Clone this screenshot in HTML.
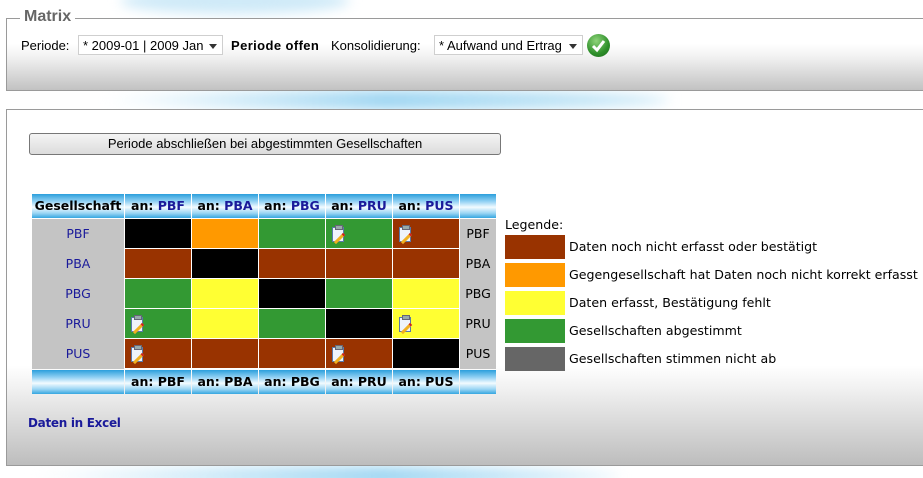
<!DOCTYPE html><html><head><meta charset="utf-8"><style>
html,body{margin:0;width:923px;height:478px;overflow:hidden;}
body{background:#fff;position:relative;font-family:"Liberation Sans",Arial,sans-serif;}
.a{position:absolute}
.glow{position:absolute;border-radius:50%;filter:blur(6px)}
.box{position:absolute;border:1px solid #9a9a9a;border-right:none}
.sel{position:absolute;top:35px;height:20px;border:1px solid #cfcfcf;background:#fff;font-size:13px;line-height:20px;padding-left:4px;box-sizing:border-box}
.sel:after{content:"";position:absolute;right:5px;top:8px;border-left:4px solid transparent;border-right:4px solid transparent;border-top:5px solid #333}
.hd{position:absolute;height:24px;background:linear-gradient(#2b9fdc 0%,#8fd0f3 30%,#f2fbff 55%,#9ad5f4 80%,#35a6e0 100%);font-family:"DejaVu Sans",Verdana,sans-serif;font-weight:bold;font-size:12.5px;line-height:24px;text-align:center;color:#000}
.hd b{color:#1a1a9a}
.c{position:absolute;width:66px;height:29px}
.lb{position:absolute;font-family:"DejaVu Sans",Verdana,sans-serif;font-size:12.5px;text-align:center;line-height:29px}
.ic{position:absolute;left:6px;top:8px;width:10px;height:13px;background:#eef3fb;border:1px solid #5a78a8}
.ic:before{content:"";position:absolute;left:2px;top:-3px;width:6px;height:3px;background:#9aa;border:1px solid #667}
.ic:after{content:"";position:absolute;left:5px;top:4px;width:3px;height:11px;background:#f0b020;transform:rotate(45deg);border-top:2px solid #d02020}
.sw{position:absolute;left:505px;width:60px;height:24px}
.lt{position:absolute;left:569px;font-family:"DejaVu Sans",Verdana,sans-serif;font-size:12.6px;line-height:24px;color:#000}
</style></head><body>
<div class="glow" style="left:120px;top:-12px;width:230px;height:26px;background:#cfeaf8"></div>
<div class="glow" style="left:100px;top:90px;width:570px;height:20px;background:linear-gradient(90deg,#fff,#9fd6f2 50%,#cdeaf8)"></div>
<div class="glow" style="left:30px;top:466px;width:590px;height:20px;background:linear-gradient(90deg,#fff,#9fd6f2 60%,#e5f4fc)"></div>

<div class="box" style="left:6px;top:18px;width:917px;height:71px;background:linear-gradient(#fff 0%,#fff 35%,#f0f0f0 55%,#c2c2c2 100%)"></div>
<div class="a" style="left:20px;top:8px;background:#fff;padding:0 4px;font-size:16px;font-weight:bold;color:#666">Matrix</div>
<div class="a" style="left:21px;top:38px;font-size:13px">Periode:</div>
<div class="sel" style="left:78px;width:145px">* 2009-01 | 2009 Jan</div>
<div class="a" style="left:231px;top:38px;font-size:13px;font-weight:bold;letter-spacing:0.4px">Periode offen</div>
<div class="a" style="left:331px;top:38px;font-size:13px">Konsolidierung:</div>
<div class="sel" style="left:434px;width:149px">* Aufwand und Ertrag</div>
<div class="a" style="left:587px;top:34px;width:23px;height:23px;border-radius:50%;background:radial-gradient(circle at 40% 30%,#8fd47a,#2e8f2a 60%,#1d6a1c)"><svg width="23" height="23"><path d="M6 12 L10 16 L17 7" stroke="#fff" stroke-width="3" fill="none"/></svg></div>

<div class="box" style="left:6px;top:109px;width:917px;height:355px;background:linear-gradient(#fff 0%,#fff 72%,#f2f2f2 78%,#bdbdbd 100%)"></div>
<div class="a" style="left:29px;top:133px;width:470px;height:20px;border:1px solid #777;border-radius:3px;background:linear-gradient(#f4f4f4,#dcdcdc);font-size:13px;text-align:center;line-height:20px">Periode abschließen bei abgestimmten Gesellschaften</div>

<div class="hd" style="left:32px;top:194px;width:92px">Gesellschaft</div>
<div class="hd" style="left:125px;top:194px;width:66px">an: <b>PBF</b></div>
<div class="hd" style="left:192px;top:194px;width:66px">an: <b>PBA</b></div>
<div class="hd" style="left:259px;top:194px;width:66px">an: <b>PBG</b></div>
<div class="hd" style="left:326px;top:194px;width:66px">an: <b>PRU</b></div>
<div class="hd" style="left:393px;top:194px;width:66px">an: <b>PUS</b></div>
<div class="hd" style="left:460px;top:194px;width:36px"></div>
<div class="a" style="left:32px;top:219px;width:92px;height:150px;background:#c4c4c4"></div>
<div class="a" style="left:460px;top:219px;width:36px;height:150px;background:#c4c4c4"></div>
<div class="lb" style="left:32px;top:219px;width:92px;color:#1a1a9a">PBF</div>
<div class="lb" style="left:32px;top:249px;width:92px;color:#1a1a9a">PBA</div>
<div class="lb" style="left:32px;top:279px;width:92px;color:#1a1a9a">PBG</div>
<div class="lb" style="left:32px;top:309px;width:92px;color:#1a1a9a">PRU</div>
<div class="lb" style="left:32px;top:339px;width:92px;color:#1a1a9a">PUS</div>
<div class="lb" style="left:460px;top:219px;width:36px">PBF</div>
<div class="lb" style="left:460px;top:249px;width:36px">PBA</div>
<div class="lb" style="left:460px;top:279px;width:36px">PBG</div>
<div class="lb" style="left:460px;top:309px;width:36px">PRU</div>
<div class="lb" style="left:460px;top:339px;width:36px">PUS</div>

<div class="c" style="left:125px;top:219px;background:#000"></div>
<div class="c" style="left:192px;top:219px;background:#f90"></div>
<div class="c" style="left:259px;top:219px;background:#339933"></div>
<div class="c" style="left:326px;top:219px;background:#339933"><i class="ic"></i></div>
<div class="c" style="left:393px;top:219px;background:#993300"><i class="ic"></i></div>
<div class="c" style="left:125px;top:249px;background:#993300"></div>
<div class="c" style="left:192px;top:249px;background:#000"></div>
<div class="c" style="left:259px;top:249px;background:#993300"></div>
<div class="c" style="left:326px;top:249px;background:#993300"></div>
<div class="c" style="left:393px;top:249px;background:#993300"></div>
<div class="c" style="left:125px;top:279px;background:#339933"></div>
<div class="c" style="left:192px;top:279px;background:#ffff33"></div>
<div class="c" style="left:259px;top:279px;background:#000"></div>
<div class="c" style="left:326px;top:279px;background:#339933"></div>
<div class="c" style="left:393px;top:279px;background:#ffff33"></div>
<div class="c" style="left:125px;top:309px;background:#339933"><i class="ic"></i></div>
<div class="c" style="left:192px;top:309px;background:#ffff33"></div>
<div class="c" style="left:259px;top:309px;background:#339933"></div>
<div class="c" style="left:326px;top:309px;background:#000"></div>
<div class="c" style="left:393px;top:309px;background:#ffff33"><i class="ic"></i></div>
<div class="c" style="left:125px;top:339px;background:#993300"><i class="ic"></i></div>
<div class="c" style="left:192px;top:339px;background:#993300"></div>
<div class="c" style="left:259px;top:339px;background:#993300"></div>
<div class="c" style="left:326px;top:339px;background:#993300"><i class="ic"></i></div>
<div class="c" style="left:393px;top:339px;background:#000"></div>

<div class="hd" style="left:32px;top:370px;width:92px"></div>
<div class="hd" style="left:125px;top:370px;width:66px">an: PBF</div>
<div class="hd" style="left:192px;top:370px;width:66px">an: PBA</div>
<div class="hd" style="left:259px;top:370px;width:66px">an: PBG</div>
<div class="hd" style="left:326px;top:370px;width:66px">an: PRU</div>
<div class="hd" style="left:393px;top:370px;width:66px">an: PUS</div>
<div class="hd" style="left:460px;top:370px;width:36px"></div>

<div class="a" style="left:505px;top:217px;font-family:'DejaVu Sans',Verdana,sans-serif;font-size:12.6px">Legende:</div>
<div class="sw" style="top:235px;background:#993300"></div><div class="lt" style="top:235px">Daten noch nicht erfasst oder bestätigt</div>
<div class="sw" style="top:263px;background:#f90"></div><div class="lt" style="top:263px">Gegengesellschaft hat Daten noch nicht korrekt erfasst</div>
<div class="sw" style="top:291px;background:#ffff33"></div><div class="lt" style="top:291px">Daten erfasst, Bestätigung fehlt</div>
<div class="sw" style="top:319px;background:#339933"></div><div class="lt" style="top:319px">Gesellschaften abgestimmt</div>
<div class="sw" style="top:347px;background:#666"></div><div class="lt" style="top:347px">Gesellschaften stimmen nicht ab</div>

<div class="a" style="left:28px;top:416px;font-family:'DejaVu Sans',Verdana,sans-serif;font-size:12px;font-weight:bold;color:#1a1a9a;letter-spacing:-0.3px">Daten in Excel</div>
</body></html>
